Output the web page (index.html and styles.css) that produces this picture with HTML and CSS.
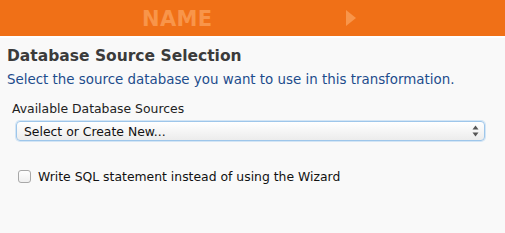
FILE: index.html
```html
<!DOCTYPE html>
<html>
<head>
<meta charset="utf-8">
<link rel="stylesheet" href="styles.css">
</head>
<body>
<div class="header">
  <span class="name">NAME</span>
  <svg class="arrow" width="10" height="16" viewBox="0 0 10 16"><path d="M0 0 L10 8 L0 16 Z" fill="#f8954a"/></svg>
</div>
<div class="content">
  <h1 class="title">Database Source Selection</h1>
  <p class="subtitle">Select the source database you want to use in this transformation.</p>
  <div class="field">
    <div class="label">Available Database Sources</div>
    <div class="select">
      <span class="select-text">Select or Create New...</span>
      <svg class="updown" width="7" height="12" viewBox="0 0 7 12"><path d="M3.5 0.5 L6.5 4.5 L0.5 4.5 Z M3.5 11.5 L6.5 7.5 L0.5 7.5 Z" fill="#555"/></svg>
    </div>
  </div>
  <label class="check">
    <span class="box"></span>
    <span class="check-text">Write SQL statement instead of using the Wizard</span>
  </label>
</div>
</body>
</html>
```
FILE: styles.css
```css
html, body {
  margin: 0;
  padding: 0;
  background: #f9f9f9;
  width: 505px;
  height: 233px;
  overflow: hidden;
}
.header {
  height: 36px;
  background: #f07017;
  border-bottom: 2px solid #ffffff;
  display: flex;
  align-items: center;
}
.name {
  margin-left: 142px;
  padding-top: 2px;
  font-family: "DejaVu Sans", Verdana, sans-serif;
  font-weight: bold;
  font-size: 21px;
  color: #f8954a;
  letter-spacing: 0.3px;
}
.arrow {
  margin-left: 134px;
}
.content {
  padding: 8px 0 0 7px;
}
.title {
  margin: 0;
  font-family: "DejaVu Sans", Verdana, sans-serif;
  font-weight: bold;
  font-size: 15.5px;
  line-height: 20px;
  color: #3b3b3b;
}
.subtitle {
  margin: 5px 0 0 0;
  font-family: "DejaVu Sans", Verdana, sans-serif;
  font-size: 13.4px;
  line-height: 17px;
  color: #1d4c8c;
}
.field {
  margin: 12px 0 0 5px;
}
.label {
  font-family: "DejaVu Sans", "Lucida Grande", sans-serif;
  font-size: 12.4px;
  line-height: 17px;
  color: #222;
}
.select {
  margin: 4px 0 0 4px;
  width: 469px;
  height: 20px;
  box-sizing: border-box;
  border: 1px solid #9ec6ea;
  border-radius: 4px;
  box-shadow: 0 0 0 1px #d3e5f5;
  background: linear-gradient(#ffffff, #ececec);
  display: flex;
  align-items: center;
  justify-content: space-between;
  padding: 0 5px 0 7px;
}
.select-text {
  font-family: "DejaVu Sans", "Lucida Grande", sans-serif;
  font-size: 12.4px;
  color: #111;
}
.check {
  margin: 28px 0 0 11px;
  display: flex;
  align-items: center;
}
.box {
  width: 13px;
  height: 13px;
  box-sizing: border-box;
  border: 1px solid #a8a8a8;
  border-radius: 3px;
  background: linear-gradient(#ffffff, #efefef);
}
.check-text {
  margin-left: 7px;
  font-family: "DejaVu Sans", "Lucida Grande", sans-serif;
  font-size: 12.4px;
  color: #111;
}
```
